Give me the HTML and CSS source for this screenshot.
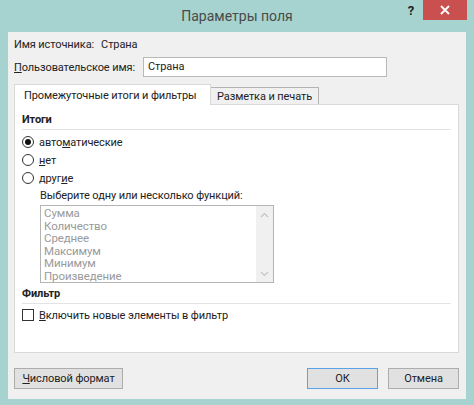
FILE: index.html
```html
<!DOCTYPE html>
<html lang="ru">
<head>
<meta charset="utf-8">
<title>Параметры поля</title>
<link rel="stylesheet" href="styles.css">
</head>
<body>
<div class="window">
  <div class="titlebar">
    <div></div>
    <div class="title">Параметры поля</div>
    <div class="controls">
      <span class="help">?</span>
      <span class="close"><svg width="10" height="10" viewBox="0 0 10 10"><path d="M1 1L9 9M9 1L1 9" stroke="#fff" stroke-width="1.8"/></svg></span>
    </div>
  </div>
  <div class="client">
    <div class="row source"><span>Имя источника:</span><span class="value">Страна</span></div>
    <div class="row name"><span class="label"><u>П</u>ользовательское имя:</span><div class="input">Страна</div></div>
    <div class="tabs">
      <div class="tab active">Промежуточные итоги и фильтры</div>
      <div class="tab">Разметка и печать</div>
    </div>
    <div class="panel">
      <div class="heading">Итоги</div>
      <div class="sep"></div>
      <div class="options">
        <div class="opt"><span class="radio checked"></span><span>авто<u>м</u>атические</span></div>
        <div class="opt"><span class="radio"></span><span><u>н</u>ет</span></div>
        <div class="opt"><span class="radio"></span><span>друг<u>и</u>е</span></div>
      </div>
      <div class="indent">
        <div class="hint">Выберите одну или несколько функций:</div>
        <div class="listbox">
          <div class="items">
            <div>Сумма</div>
            <div>Количество</div>
            <div>Среднее</div>
            <div>Максимум</div>
            <div>Минимум</div>
            <div>Произведение</div>
          </div>
          <div class="scroll">
            <svg width="9" height="6" viewBox="0 0 9 6"><path d="M1 5L4.5 1.5L8 5" fill="none" stroke="#c4c4c4" stroke-width="1.2"/></svg>
            <svg width="9" height="6" viewBox="0 0 9 6"><path d="M1 1L4.5 4.5L8 1" fill="none" stroke="#c4c4c4" stroke-width="1.2"/></svg>
          </div>
        </div>
      </div>
      <div class="heading filter">Фильтр</div>
      <div class="sep"></div>
      <div class="opt check-row"><span class="checkbox"></span><span><u>В</u>ключить новые элементы в фильтр</span></div>
    </div>
    <div class="buttons">
      <div class="btn wide"><u>Ч</u>исловой формат</div>
      <div class="spacer"></div>
      <div class="btn default">ОК</div>
      <div class="btn">Отмена</div>
    </div>
  </div>
</div>
</body>
</html>
```
FILE: styles.css
```css
html, body {
  margin: 0;
  padding: 0;
}
body {
  width: 474px;
  height: 405px;
  overflow: hidden;
  font-family: Roboto, "Noto Sans", sans-serif;
  font-size: 11px;
  letter-spacing: -0.1px;
  color: #222;
  white-space: nowrap;
}
.window {
  width: 474px;
  height: 405px;
  background: #a6d2cf;
  display: flex;
  flex-direction: column;
}
.titlebar {
  height: 32px;
  display: grid;
  grid-template-columns: 1fr auto 1fr;
}
.title {
  font-size: 14px;
  letter-spacing: 0;
  color: #4a4a4a;
  line-height: 30px;
  padding-top: 1px;
}
.controls {
  display: flex;
  justify-content: flex-end;
  align-items: flex-start;
  padding-right: 7px;
}
.help {
  font-weight: bold;
  font-size: 13px;
  color: #222;
  line-height: 22px;
  margin-right: 9px;
}
.close {
  width: 44px;
  height: 20px;
  background: #c9504f;
  display: flex;
  align-items: center;
  justify-content: center;
}
.client {
  margin: 0 8px;
  height: 367px;
  box-sizing: border-box;
  background: #f0f0f0;
  padding: 4px 7px 10px 6px;
  display: flex;
  flex-direction: column;
}
.row {
  display: flex;
  align-items: center;
}
.source {
  height: 16px;
}
.source .value {
  margin-left: 7px;
}
.name {
  margin-top: 5px;
  height: 20px;
}
.name .label {
  width: 129px;
}
.input {
  width: 244px;
  height: 20px;
  box-sizing: border-box;
  border: 1px solid #b9b9b9;
  background: #fff;
  padding-left: 4px;
  line-height: 18px;
}
.tabs {
  margin-top: 7px;
  display: flex;
  align-items: flex-start;
  position: relative;
  z-index: 1;
}
.tab {
  height: 17px;
  margin-top: 3px;
  box-sizing: border-box;
  border: 1px solid #b4b4b4;
  border-bottom: none;
  border-left: none;
  background: #f0f0f0;
  padding: 0 6px;
  line-height: 17px;
  width: 108px;
}
.tab.active {
  width: 197px;
  height: 21px;
  margin-top: 0;
  margin-bottom: -1px;
  background: #fff;
  border: 1px solid #d9d9d9;
  border-bottom: none;
  padding: 2px 9px 0;
  line-height: 17px;
}
.panel {
  height: 249px;
  box-sizing: border-box;
  background: #fff;
  border: 1px solid #d9d9d9;
  padding: 7px 7px 0 7px;
  display: flex;
  flex-direction: column;
}
.heading {
  font-weight: bold;
  line-height: 16px;
  height: 16px;
}
.sep {
  height: 1px;
  background: #e3e3e3;
  margin-top: 1px;
}
.options {
  margin-top: 3px;
  display: flex;
  flex-direction: column;
}
.opt {
  height: 18px;
  display: flex;
  align-items: center;
  gap: 5px;
}
.radio {
  width: 12px;
  height: 12px;
  box-sizing: border-box;
  border: 1px solid #333;
  border-radius: 50%;
  background: #fff;
  display: flex;
  align-items: center;
  justify-content: center;
}
.radio.checked::after {
  content: "";
  width: 6px;
  height: 6px;
  border-radius: 50%;
  background: #111;
}
.indent {
  margin-left: 18px;
  margin-top: 1px;
}
.hint {
  line-height: 16px;
  height: 16px;
}
.listbox {
  margin-top: 1px;
  width: 234px;
  height: 78px;
  box-sizing: border-box;
  border: 1px solid #b4b4b4;
  display: flex;
  overflow: hidden;
}
.items {
  flex: 1;
  padding: 1px 0 0 3px;
  color: #9a9a9a;
  font-size: 11.5px;
  line-height: 12.5px;
}
.scroll {
  width: 17px;
  background: #f0f0f0;
  display: flex;
  flex-direction: column;
  justify-content: space-between;
  align-items: center;
  padding: 6px 0 5px;
  box-sizing: border-box;
}
.filter {
  margin-top: 3px;
}
.check-row {
  margin-top: 2px;
}
.checkbox {
  width: 12px;
  height: 12px;
  box-sizing: border-box;
  border: 1px solid #333;
  background: #fff;
}
.buttons {
  margin-top: 15px;
  display: flex;
  gap: 10px;
}
.spacer {
  flex: 1;
}
.btn {
  height: 21px;
  width: 71px;
  box-sizing: border-box;
  border: 1px solid #adadad;
  background: #e1e1e1;
  text-align: center;
  line-height: 19px;
}
.btn.wide {
  width: 109px;
}
.btn.default {
  border-color: #5aa3e6;
}
```
